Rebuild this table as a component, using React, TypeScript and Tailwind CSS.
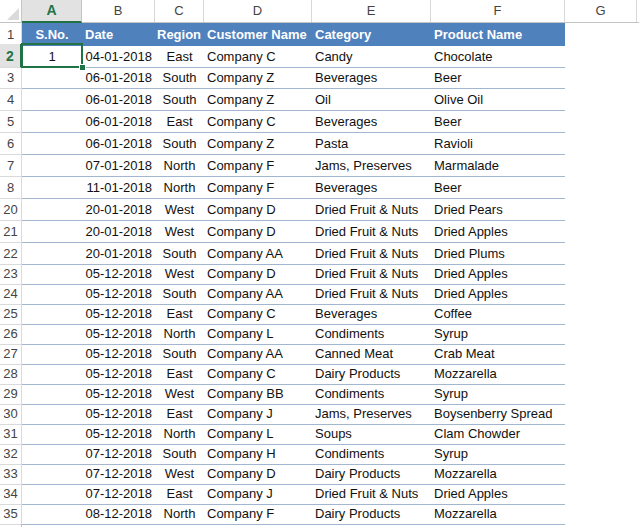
const cols = ['A', 'B', 'C', 'D', 'E', 'F', 'G'];

type Row = [number, string, string, string, string, string, string];

const rows: Row[] = [
  [2, '1', '04-01-2018', 'East', 'Company C', 'Candy', 'Chocolate'],
  [3, '', '06-01-2018', 'South', 'Company Z', 'Beverages', 'Beer'],
  [4, '', '06-01-2018', 'South', 'Company Z', 'Oil', 'Olive Oil'],
  [5, '', '06-01-2018', 'East', 'Company C', 'Beverages', 'Beer'],
  [6, '', '06-01-2018', 'South', 'Company Z', 'Pasta', 'Ravioli'],
  [7, '', '07-01-2018', 'North', 'Company F', 'Jams, Preserves', 'Marmalade'],
  [8, '', '11-01-2018', 'North', 'Company F', 'Beverages', 'Beer'],
  [20, '', '20-01-2018', 'West', 'Company D', 'Dried Fruit & Nuts', 'Dried Pears'],
  [21, '', '20-01-2018', 'West', 'Company D', 'Dried Fruit & Nuts', 'Dried Apples'],
  [22, '', '20-01-2018', 'South', 'Company AA', 'Dried Fruit & Nuts', 'Dried Plums'],
  [23, '', '05-12-2018', 'West', 'Company D', 'Dried Fruit & Nuts', 'Dried Apples'],
  [24, '', '05-12-2018', 'South', 'Company AA', 'Dried Fruit & Nuts', 'Dried Apples'],
  [25, '', '05-12-2018', 'East', 'Company C', 'Beverages', 'Coffee'],
  [26, '', '05-12-2018', 'North', 'Company L', 'Condiments', 'Syrup'],
  [27, '', '05-12-2018', 'South', 'Company AA', 'Canned Meat', 'Crab Meat'],
  [28, '', '05-12-2018', 'East', 'Company C', 'Dairy Products', 'Mozzarella'],
  [29, '', '05-12-2018', 'West', 'Company BB', 'Condiments', 'Syrup'],
  [30, '', '05-12-2018', 'East', 'Company J', 'Jams, Preserves', 'Boysenberry Spread'],
  [31, '', '05-12-2018', 'North', 'Company L', 'Soups', 'Clam Chowder'],
  [32, '', '07-12-2018', 'South', 'Company H', 'Condiments', 'Syrup'],
  [33, '', '07-12-2018', 'West', 'Company D', 'Dairy Products', 'Mozzarella'],
  [34, '', '07-12-2018', 'East', 'Company J', 'Dried Fruit & Nuts', 'Dried Apples'],
  [35, '', '08-12-2018', 'North', 'Company F', 'Dairy Products', 'Mozzarella'],
];

const grid = 'grid grid-cols-[22px_60px_73px_49px_108px_119px_134px_72px_1fr]';
const cell = 'flex items-center whitespace-nowrap overflow-visible border-b border-[#a3b6cf]';

export default function App() {
  return (
    <div
      className="w-[639px] h-[527px] overflow-hidden bg-white text-[13px] text-[#111]"
      style={{ fontFamily: '"Liberation Sans", Arial, sans-serif' }}
    >
      {/* column letters */}
      <div className={`${grid} h-[23px] border-b border-[#c4c4c4] text-[#444]`}>
        <div className="relative border-r border-[#c4c4c4]">
          <svg className="absolute right-[2px] bottom-[2px]" width="12" height="12" viewBox="0 0 12 12">
            <polygon points="12,0 12,12 0,12" fill="#dadada" />
          </svg>
        </div>
        {cols.map((c) => (
          <div
            key={c}
            className={
              c === 'A'
                ? 'flex items-center justify-center bg-[#e2e2e2] border-r border-[#c4c4c4] border-b-2 border-b-[#217346] text-[#217346] font-bold text-[14px] -mb-[1px]'
                : 'flex items-center justify-center border-r border-[#d8d8d8]'
            }
          >
            {c}
          </div>
        ))}
        <div />
      </div>

      {/* row 1: table header */}
      <div className={`${grid} h-[21px]`}>
        <div className="flex items-center justify-center pt-[2px] border-r border-[#c4c4c4] border-b border-[#dadada] text-[#444]">1</div>
        <div className="flex items-center justify-center pt-[1px] bg-[#4f81bd] text-white font-bold">S.No.</div>
        <div className="flex items-center pl-[3px] pt-[1px] bg-[#4f81bd] text-white font-bold">Date</div>
        <div className="flex items-center pl-[2px] pt-[1px] bg-[#4f81bd] text-white font-bold">Region</div>
        <div className="flex items-center pl-[3px] pt-[1px] bg-[#4f81bd] text-white font-bold whitespace-nowrap">Customer Name</div>
        <div className="flex items-center pl-[3px] pt-[1px] bg-[#4f81bd] text-white font-bold">Category</div>
        <div className="flex items-center pl-[3px] pt-[1px] bg-[#4f81bd] text-white font-bold">Product Name</div>
        <div />
        <div />
      </div>

      {rows.map(([n, sno, date, region, cust, cat, prod]) => {
        const active = n === 2;
        const tall = n <= 22;
        const pad = tall ? 'pt-[2px]' : 'pt-0';
        return (
          <div key={n} className={`${grid} ${tall ? 'h-[22px]' : 'h-[20px]'}`}>
            <div
              className={
                active
                  ? `flex items-center justify-center ${pad} bg-[#e2e2e2] border-r-2 border-[#217346] border-b border-b-[#dadada] text-[#217346] font-bold text-[14px]`
                  : `flex items-center justify-center ${pad} border-r border-[#c4c4c4] border-b border-[#dadada] text-[#444]`
              }
            >
              {n}
            </div>
            <div className={`${cell} ${pad} relative justify-center`}>
              {sno}
              {active && (
                <>
                  <div className="absolute -top-[1px] -left-[1px] -right-[1px] -bottom-[1px] border-2 border-[#217346]" />
                  <div className="absolute -right-[4px] -bottom-[4px] w-[7px] h-[7px] bg-[#217346] border border-white" />
                </>
              )}
            </div>
            <div className={`${cell} ${pad} justify-end pr-[3px]`}>{date}</div>
            <div className={`${cell} ${pad} justify-center`}>{region}</div>
            <div className={`${cell} ${pad} pl-[3px]`}>{cust}</div>
            <div className={`${cell} ${pad} pl-[3px]`}>{cat}</div>
            <div className={`${cell} ${pad} pl-[3px]`}>{prod}</div>
            <div />
            <div />
          </div>
        );
      })}

      <div className={`${grid} h-[10px]`}>
        <div className="border-r border-[#c4c4c4]" />
      </div>
    </div>
  );
}
